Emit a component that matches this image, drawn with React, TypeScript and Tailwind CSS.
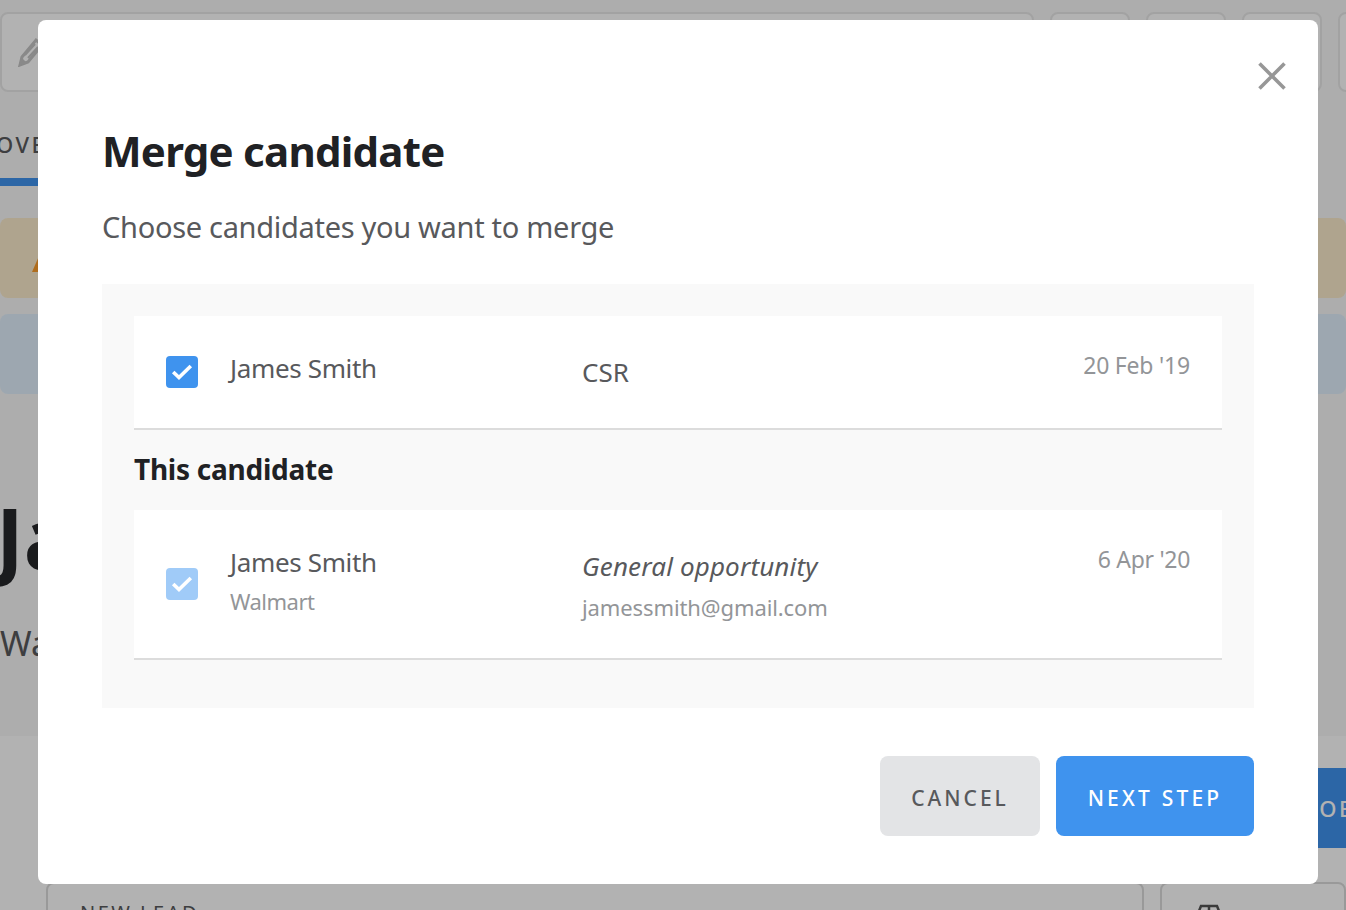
import React from 'react';

const FONT = "font-['Noto_Sans','Open_Sans',sans-serif]";

function Checkbox({ faded = false }: { faded?: boolean }) {
  return (
    <div className={`w-8 h-8 rounded flex items-center justify-center ${faded ? 'bg-[#a0cbf8]' : 'bg-[#3f93ee]'}`}>
      <svg width="22" height="18" viewBox="0 0 22 18" fill="none">
        <path d="M2.2 9L8 14.6L19.8 3" stroke="white" strokeWidth="3.6" />
      </svg>
    </div>
  );
}

function BackgroundPage() {
  return (
    <div className="h-full bg-white">
      <div className="bg-[#f8f8f8] h-[736px]">
        {/* Top action bar */}
        <div className="flex gap-4 pt-3">
          <div className="w-[1034px] shrink-0 h-20 border-2 border-[#e8e8e8] rounded-lg bg-white flex items-center pl-4">
            <svg width="26" height="30" viewBox="0 0 26 30" fill="none" className="text-[#c4c4c4]">
              <path d="M2 28L4 20L18 3L24 8L10 25Z" stroke="currentColor" strokeWidth="3" fill="none" />
              <path d="M1 29L3 20L9 26Z" fill="currentColor" />
              <path d="M7 18L17 7M10 21L20 10" stroke="currentColor" strokeWidth="2" />
            </svg>
          </div>
          {[0, 1, 2, 3].map((i) => (
            <div key={i} className="w-20 h-20 shrink-0 border-2 border-[#e8e8e8] rounded-lg bg-white" />
          ))}
        </div>

        {/* Tabs */}
        <div className="h-[94px] -ml-1 flex">
          <div className="w-64 flex flex-col justify-end">
            <div className="text-[22px] leading-[28px] tracking-[2.5px] font-medium text-[#58595c] mb-5">OVERVIEW</div>
            <div className="h-2 bg-[#3f93ee]" />
          </div>
        </div>

        {/* Alerts */}
        <div className="mt-8 h-20 bg-[#fbebcc] rounded-lg pl-8 pt-[22px]">
          <svg width="28" height="32" viewBox="0 0 28 32">
            <path d="M14 0L28 32H0Z" fill="#fb9d2c" />
          </svg>
        </div>
        <div className="mt-4 h-20 bg-[#e1f0fd] rounded-lg" />

        {/* Candidate name */}
        <div className="pt-[83px]">
          <div className="-ml-1 text-[84px] leading-[120px] font-bold text-[#26272a]">James Smith</div>
          <div className="text-[34px] leading-[50px] mt-[21px] text-[#58595c]">Walmart</div>
        </div>
      </div>

      {/* Main action */}
      <div className="flex justify-end pt-8 -mr-[54px]">
        <div className="w-[300px] h-20 bg-[#3f93ee] rounded-lg flex items-center justify-end pr-[44px] text-white text-[22px] font-medium tracking-[2.5px]">
          JOB
        </div>
      </div>

      {/* Cards */}
      <div className="flex gap-4 pl-[46px] pt-[34px]">
        <div className="w-[1098px] h-40 border-2 border-[#dcdcdc] rounded-lg pl-8 pt-[17px] text-[20px] leading-6 tracking-[2.5px] text-[#58595c]">
          NEW LEAD
        </div>
        <div className="flex-1 h-40 border-2 border-[#dcdcdc] rounded-lg pl-8 pt-5">
          <svg width="30" height="26" viewBox="0 0 30 26" fill="none" stroke="#555" strokeWidth="2.5">
            <path d="M3 12L7 2H23L27 12V24H3Z" />
            <path d="M15 2V24M3 12H27" />
          </svg>
        </div>
      </div>
    </div>
  );
}

export default function App() {
  return (
    <div className={`relative h-screen w-full overflow-hidden ${FONT}`}>
      <BackgroundPage />

      <div className="fixed inset-0 bg-black/30 flex items-start pl-[38px] pt-5">
        <div className="relative w-[1280px] h-[864px] bg-white rounded-lg px-16 pt-[99px]">
          <button className="absolute top-[42px] right-[32px] w-7 h-7 cursor-pointer">
            <svg width="28" height="28" viewBox="0 0 28 28" fill="none">
              <path d="M1.5 1.5L26.5 26.5M26.5 1.5L1.5 26.5" stroke="#979797" strokeWidth="3.6" />
            </svg>
          </button>

          <h2 className="text-[42px] leading-[64px] tracking-[-0.75px] font-bold text-[#202124]">Merge candidate</h2>
          <p className="mt-[24px] text-[29px] leading-[40px] tracking-[-0.3px] text-[#58595c]">Choose candidates you want to merge</p>

          {/* Candidates */}
          <div className="mt-[37px] bg-[#f9f9f9] p-8 pb-12 h-[424px]">
            <div className="h-[114px] bg-white border-b-2 border-[#dcdcdc] px-8 grid grid-cols-[64px_352px_1fr_auto]">
              <div className="pt-10"><Checkbox /></div>
              <div className="pt-[34px] text-[26px] leading-9 tracking-[-0.36px] text-[#58595c]">James Smith</div>
              <div className="pt-[38px] text-[26px] leading-9 text-[#58595c]">CSR</div>
              <div className="pt-[33px] text-[23px] leading-8 tracking-[-0.2px] text-[#939598]">20 Feb '19</div>
            </div>

            <h3 className="h-[80px] pt-[19px] text-[28px] leading-10 tracking-[-0.25px] font-bold text-[#202124]">This candidate</h3>

            <div className="h-[150px] bg-white border-b-2 border-[#dcdcdc] px-8 grid grid-cols-[64px_352px_1fr_auto]">
              <div className="pt-[58px]"><Checkbox faded /></div>
              <div className="pt-[34px]">
                <div className="text-[26px] leading-9 tracking-[-0.36px] text-[#58595c]">James Smith</div>
                <div className="mt-[3px] text-[22px] leading-9 tracking-[-0.5px] text-[#939598]">Walmart</div>
              </div>
              <div className="pt-[38px]">
                <div className="text-[26px] leading-9 tracking-[0.15px] italic text-[#58595c]">General opportunity</div>
                <div className="mt-[5px] text-[22px] leading-9 tracking-[-0.1px] text-[#939598]">jamessmith@gmail.com</div>
              </div>
              <div className="pt-[33px] text-[23px] leading-8 tracking-[-0.3px] text-[#939598]">6 Apr '20</div>
            </div>
          </div>

          {/* Footer */}
          <div className="mt-12 flex justify-end gap-4">
            <button className="w-40 h-20 pt-[6px] bg-[#e3e4e6] rounded-lg text-[21px] font-medium tracking-[3px] text-[#58595c] cursor-pointer">CANCEL</button>
            <button className="w-[198px] h-20 pt-[6px] bg-[#3f93ee] rounded-lg text-[21px] font-medium tracking-[3.2px] text-white cursor-pointer">NEXT STEP</button>
          </div>
        </div>
      </div>
    </div>
  );
}
